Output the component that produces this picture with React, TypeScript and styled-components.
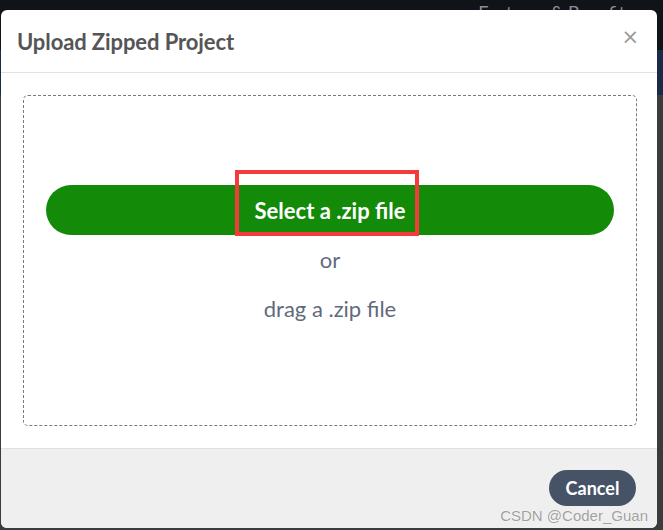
import styled, { createGlobalStyle } from "styled-components";

const GlobalStyle = createGlobalStyle`
  *, *::before, *::after {
    box-sizing: border-box;
  }
  html, body {
    margin: 0;
    padding: 0;
    background: #3a3b3d;
  }
  #root {
    width: 663px;
    height: 530px;
    overflow: hidden;
  }
`;

const Page = () => (
  <PageContainer>
    <TopNav>
      <NavLink>Features &amp; Benefits</NavLink>
    </TopNav>
    <SubNav />
    <PageBody />
  </PageContainer>
);

const UploadModal = () => (
  <Modal>
    <ModalHeader>
      <ModalTitle>Upload Zipped Project</ModalTitle>
      <CloseButton aria-label="Close">×</CloseButton>
    </ModalHeader>

    <ModalBody>
      <DropZone>
        <SelectButton>
          Select a .zip file
          <Highlight />
        </SelectButton>
        <HintText>or</HintText>
        <HintText>drag a .zip file</HintText>
      </DropZone>
    </ModalBody>

    <ModalFooter>
      <CancelButton>Cancel</CancelButton>
    </ModalFooter>
  </Modal>
);

const App = () => (
  <>
    <GlobalStyle />
    <Page />
    <UploadModal />
    <Watermark>CSDN @Coder_Guan</Watermark>
  </>
);

const PageContainer = styled.div`
  width: 663px;
  height: 530px;
  display: flex;
  flex-direction: column;
`;

const TopNav = styled.div`
  height: 50px;
  background: #101318;
  display: flex;
  justify-content: flex-end;
  padding-right: 30px;
`;

const NavLink = styled.span`
  font-family: Lato, "Open Sans", sans-serif;
  font-size: 18px;
  color: #8c9096;
  margin-top: 1px;
`;

const SubNav = styled.div`
  height: 45px;
  background: #1b2b47;
`;

const PageBody = styled.div`
  flex: 1;
  background: #3a3b3d;
`;

const Modal = styled.div`
  position: absolute;
  left: 1px;
  top: 10px;
  width: 656px;
  height: 518px;
  background: #ffffff;
  border-radius: 6px;
  overflow: hidden;
  display: flex;
  flex-direction: column;
  font-family: Lato, "Open Sans", sans-serif;
`;

const ModalHeader = styled.div`
  height: 63px;
  border-bottom: 1px solid #e2e2e2;
  display: flex;
  align-items: center;
  justify-content: space-between;
  padding: 0 18px 0 16px;
`;

const ModalTitle = styled.h3`
  margin: 0;
  font-size: 22px;
  font-weight: 700;
  color: #555555;
  letter-spacing: -0.1px;
`;

const CloseButton = styled.button`
  border: none;
  background: none;
  padding: 0;
  font-family: "DejaVu Sans", sans-serif;
  font-size: 21px;
  line-height: 1;
  color: #9a9a9a;
  margin-top: -8px;
`;

const ModalBody = styled.div`
  flex: 1;
  padding: 22px 20px 22px 22px;
  display: flex;
`;

const DropZone = styled.div`
  flex: 1;
  border: 1px dashed #7a7a7a;
  border-radius: 5px;
  display: flex;
  flex-direction: column;
  align-items: stretch;
  padding: 89px 22px 0 22px;
`;

const SelectButton = styled.button`
  position: relative;
  height: 50px;
  border: none;
  border-radius: 25px;
  background: #138a08;
  color: #ffffff;
  font-family: Lato, "Open Sans", sans-serif;
  font-size: 22px;
  font-weight: 700;
  cursor: pointer;
`;

const Highlight = styled.span`
  position: absolute;
  left: 189px;
  top: -15px;
  width: 184px;
  height: 66px;
  border: 4px solid #f43b3b;
  pointer-events: none;
`;

const HintText = styled.p`
  margin: 0;
  text-align: center;
  font-size: 22px;
  line-height: 49px;
  color: #5f6b7d;
`;

const ModalFooter = styled.div`
  height: 80px;
  background: #efefef;
  border-top: 1px solid #e0e0e0;
  display: flex;
  justify-content: flex-end;
  align-items: flex-start;
  padding: 21px 21px 0 0;
`;

const CancelButton = styled.button`
  height: 36px;
  width: 87px;
  border: none;
  border-radius: 18px;
  background: #465366;
  color: #ffffff;
  font-family: Lato, "Open Sans", sans-serif;
  font-size: 18px;
  font-weight: 700;
  cursor: pointer;
`;

const Watermark = styled.div`
  position: absolute;
  right: 15px;
  bottom: 6px;
  font-family: "Liberation Sans", Arial, sans-serif;
  font-size: 15px;
  color: #a0a0a0;
  text-shadow: 0 0 1px #ffffff, 0 0 1px #ffffff;
`;

export default App;
